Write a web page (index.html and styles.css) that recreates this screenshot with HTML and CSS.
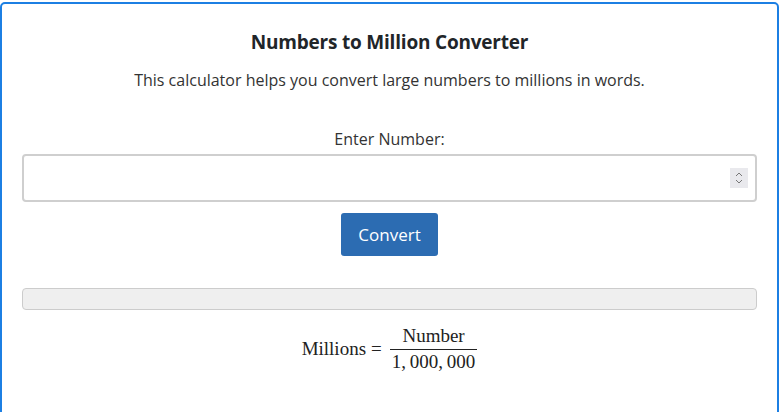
FILE: index.html
```html
<!DOCTYPE html>
<html>
<head>
    <title>Numbers to Million Converter</title>
    <link rel="stylesheet" href="styles.css">
</head>
<body>
    <div class="card">
        <h1>Numbers to Million Converter</h1>
        <p class="intro">This calculator helps you convert large numbers to millions in words.</p>

        <label class="label" for="num">Enter Number:</label>
        <div class="field">
            <input id="num" class="input" type="text">
            <span class="spin">
                <svg width="10" height="14" viewBox="0 0 10 14">
                    <path d="M2 5 L5 2 L8 5" fill="none" stroke="#777" stroke-width="1"/>
                    <path d="M2 9 L5 12 L8 9" fill="none" stroke="#777" stroke-width="1"/>
                </svg>
            </span>
        </div>
        <div class="actions">
            <button class="btn">Convert</button>
        </div>

        <div class="result"></div>

        <div class="formula">
            <span class="lhs">Millions</span>
            <span class="eq">=</span>
            <span class="frac">
                <span class="num">Number</span>
                <span class="den">1,&#8201;000,&#8201;000</span>
            </span>
        </div>
    </div>
</body>
</html>
```

FILE: styles.css
```css
body {
    margin: 0;
    font-family: "Open Sans", "Noto Sans", sans-serif;
    color: #212529;
    background: #fff;
}
.card {
    margin-top: 2px;
    border: 2px solid #1c7fe3;
    border-radius: 5px;
    padding: 23px 20px 40px;
    height: 420px;
    box-sizing: border-box;
}
h1 {
    margin: 0;
    text-align: center;
    font-size: 19px;
    font-weight: bold;
    line-height: 30px;
    letter-spacing: -0.2px;
}
.intro {
    text-align: center;
    font-size: 16px;
    margin: 11px 0 0;
    line-height: 24px;
    color: #333;
}
.label {
    display: block;
    text-align: center;
    font-size: 16px;
    line-height: 24px;
    margin-top: 35px;
    color: #333;
}
.field {
    position: relative;
    margin-top: 3px;
}
.input {
    display: block;
    width: 100%;
    box-sizing: border-box;
    height: 48px;
    border: 2px solid #cfcfcf;
    border-radius: 4px;
    font-size: 16px;
    padding: 0 10px;
}
.spin {
    position: absolute;
    right: 9px;
    top: 14px;
    width: 18px;
    height: 20px;
    background: #e9e9ed;
    display: flex;
    align-items: center;
    justify-content: center;
}
.actions {
    display: flex;
    justify-content: center;
    margin-top: 11px;
}
.btn {
    background: #2c6cb2;
    color: #fff;
    border: none;
    border-radius: 3px;
    width: 97px;
    height: 43px;
    font-family: inherit;
    font-size: 17px;
}
.result {
    margin-top: 32px;
    height: 22px;
    box-sizing: border-box;
    background: #efefef;
    border: 1px solid #cccccc;
    border-radius: 4px;
}
.formula {
    display: flex;
    justify-content: center;
    align-items: center;
    margin-top: 14px;
    font-family: "Liberation Serif", "DejaVu Serif", serif;
    font-size: 19px;
    color: #222;
}
.eq {
    margin: 0 8px 0 5px;
}
.frac {
    display: flex;
    flex-direction: column;
    align-items: center;
}
.num {
    padding: 0 4px 1px;
    line-height: 24px;
}
.den {
    border-top: 1px solid #222;
    padding: 0 2px;
    line-height: 24px;
}
```
